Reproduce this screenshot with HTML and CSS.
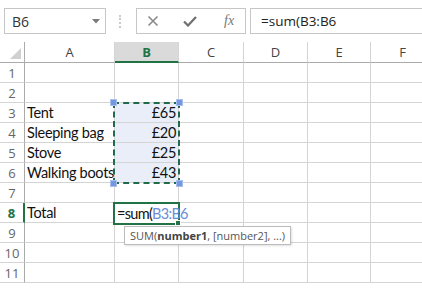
FILE: index.html
```html
<!DOCTYPE html>
<html lang="en">
<head>
    <meta charset="UTF-8">
    <title>Book1 - Excel</title>
    <link rel="stylesheet" href="styles.css">
</head>
<body>

    <div class="toolbar">
        <div class="namebox">
            <span>B6</span>
            <svg class="drop" width="8" height="5" viewBox="0 0 8 5"><path d="M0 0h8L4 4.5z" fill="#7a7a7a"/></svg>
        </div>
        <div class="grip"></div>
        <div class="fx-buttons">
            <svg class="cancel" width="12" height="12" viewBox="0 0 12 12"><path d="M1.5 1.5l9 9M10.5 1.5l-9 9" stroke="#8a8a8a" stroke-width="1.6" fill="none"/></svg>
            <svg class="enter" width="14" height="11" viewBox="0 0 14 11"><path d="M1 5.5l4 4L13 1" stroke="#6f6f6f" stroke-width="2.2" fill="none"/></svg>
            <span class="fx">fx</span>
        </div>
        <div class="formula">=sum(B3:B6</div>
    </div>

    <div class="sheet">
        <div class="grid">
            <div class="corner"><span class="tri"></span></div>
            <div class="col">A</div>
            <div class="col on">B</div>
            <div class="col">C</div>
            <div class="col">D</div>
            <div class="col">E</div>
            <div class="col">F</div>

            <div class="row">1</div><div class="cell a"></div><div class="cell"></div><div class="cell"></div><div class="cell"></div><div class="cell"></div><div class="cell"></div>
            <div class="row">2</div><div class="cell a"></div><div class="cell"></div><div class="cell"></div><div class="cell"></div><div class="cell"></div><div class="cell"></div>
            <div class="row">3</div><div class="cell a">Tent</div><div class="cell num sel">£65</div><div class="cell"></div><div class="cell"></div><div class="cell"></div><div class="cell"></div>
            <div class="row">4</div><div class="cell a">Sleeping bag</div><div class="cell num sel">£20</div><div class="cell"></div><div class="cell"></div><div class="cell"></div><div class="cell"></div>
            <div class="row">5</div><div class="cell a">Stove</div><div class="cell num sel">£25</div><div class="cell"></div><div class="cell"></div><div class="cell"></div><div class="cell"></div>
            <div class="row">6</div><div class="cell a">Walking boots</div><div class="cell num sel">£43</div><div class="cell"></div><div class="cell"></div><div class="cell"></div><div class="cell"></div>
            <div class="row">7</div><div class="cell a"></div><div class="cell"></div><div class="cell"></div><div class="cell"></div><div class="cell"></div><div class="cell"></div>
            <div class="row on">8</div><div class="cell a">Total</div><div class="cell"></div><div class="cell"></div><div class="cell"></div><div class="cell"></div><div class="cell"></div>
            <div class="row">9</div><div class="cell a"></div><div class="cell"></div><div class="cell"></div><div class="cell"></div><div class="cell"></div><div class="cell"></div>
            <div class="row">10</div><div class="cell a"></div><div class="cell"></div><div class="cell"></div><div class="cell"></div><div class="cell"></div><div class="cell"></div>
            <div class="row">11</div><div class="cell a"></div><div class="cell"></div><div class="cell"></div><div class="cell"></div><div class="cell"></div><div class="cell"></div>
        </div>

        <!-- range being referenced by the formula -->
        <div class="marquee">
            <span class="knob tl"></span><span class="knob tr"></span>
            <span class="knob bl"></span><span class="knob br"></span>
        </div>

        <div class="active">
            <span class="fill"></span>
            <span class="edit">=sum(<span class="ref">B3:B6</span><span class="caret"></span></span>
        </div>

        <div class="tip">SUM(<b>number1</b>, [number2], ...)</div>
    </div>

</body>
</html>
```

FILE: styles.css
```css
body {
    margin: 0;
    background: white;
    font-family: Lato, "Liberation Sans", sans-serif;
    overflow: hidden;
}
.toolbar {
    display: flex;
    align-items: center;
    height: 42px;
    padding: 0 0 0 4px;
    box-sizing: border-box;
    font-family: "Open Sans", "Noto Sans", sans-serif;
}
.namebox {
    display: flex;
    align-items: center;
    justify-content: space-between;
    width: 102px;
    height: 26px;
    border: 1px solid #c6c6c6;
    box-sizing: border-box;
    padding: 0 5px 0 7px;
    font-size: 14px;
    color: #333;
}
.grip {
    width: 0;
    height: 13px;
    margin: 0 15px 0 13px;
    border-left: 2px dotted #c8c8c8;
}
.fx-buttons {
    display: flex;
    align-items: center;
    width: 110px;
    height: 26px;
    border: 1px solid #c6c6c6;
    box-sizing: border-box;
    padding: 0 0 0 10px;
}
.enter {
    margin-left: 24px;
}
.fx {
    margin-left: 27px;
    font-family: "Liberation Serif", serif;
    font-style: italic;
    font-size: 14px;
    color: #777;
}
.formula {
    flex: 1;
    height: 26px;
    margin-left: 4px;
    border: 1px solid #c6c6c6;
    border-right: none;
    box-sizing: border-box;
    padding-left: 10px;
    font-size: 13.5px;
    line-height: 24px;
    color: #222;
}
.sheet {
    position: relative;
}
.grid {
    display: grid;
    grid-template-columns: 25px 90px 64px 65px 64px 63px 64px;
    grid-auto-rows: 20px;
    grid-template-rows: 21px;
}
.grid > div {
    box-sizing: border-box;
    border-right: 1px solid #d4d4d4;
    border-bottom: 1px solid #d4d4d4;
    white-space: nowrap;
}
.corner {
    position: relative;
    border-bottom-color: #ababab !important;
    border-right-color: #ababab !important;
}
.tri {
    position: absolute;
    right: 3px;
    bottom: 3px;
    border-left: 11px solid transparent;
    border-bottom: 11px solid #d0d0d0;
}
.col {
    border-bottom-color: #ababab !important;
    text-align: center;
    font-family: "Open Sans", "Noto Sans", sans-serif;
    font-size: 13px;
    line-height: 20px;
    color: #444;
}
.col.on {
    background: #dadada;
    color: #217346;
    font-weight: bold;
    border-bottom: 2px solid #217346 !important;
}
.row {
    border-right-color: #ababab !important;
    text-align: center;
    font-family: "Open Sans", "Noto Sans", sans-serif;
    font-size: 13px;
    line-height: 20px;
    color: #666;
}
.row.on {
    color: #217346;
    font-weight: bold;
    border-right: 2px solid #217346 !important;
}
.cell {
    font-size: 14.5px;
    letter-spacing: -0.3px;
    line-height: 20px;
    color: #111;
    padding: 0 2px;
    overflow: hidden;
}
.num {
    text-align: right;
}
.sel {
    background: #e9eef9;
}
.marquee {
    position: absolute;
    left: 113px;
    top: 60px;
    width: 67px;
    height: 82px;
    box-sizing: border-box;
    border: 2px dashed #1f6b4a;
}
.knob {
    position: absolute;
    width: 5px;
    height: 5px;
    background: #7397e0;
    border: 1px solid #a9c0ee;
}
.tl { left: -5px; top: -5px; }
.tr { right: -5px; top: -5px; }
.bl { left: -5px; bottom: -5px; }
.br { right: -5px; bottom: -5px; }
.active {
    position: absolute;
    left: 113px;
    top: 160px;
    width: 67px;
    height: 23px;
    box-sizing: border-box;
    border: 2px solid #217346;
    background: white;
}
.edit {
    position: relative;
    display: flex;
    align-items: center;
    height: 19px;
    padding-left: 2px;
    font-size: 14.5px;
    letter-spacing: -0.7px;
    color: #111;
    white-space: nowrap;
}
.ref {
    color: #6d8dd6;
}
.caret {
    display: inline-block;
    width: 1px;
    height: 17px;
    margin-left: 2px;
    background: #111;
}
.fill {
    position: absolute;
    right: -3px;
    bottom: -3px;
    width: 4px;
    height: 4px;
    background: #217346;
    border: 1px solid white;
}
.tip {
    position: absolute;
    left: 124px;
    top: 184px;
    height: 19px;
    padding: 0 5px;
    box-sizing: border-box;
    border: 1px solid #bcbcbc;
    background: white;
    box-shadow: 1px 1px 2px rgba(0, 0, 0, 0.12);
    font-family: "Open Sans", "Noto Sans", sans-serif;
    font-size: 11px;
    line-height: 17px;
    color: #555;
    white-space: nowrap;
}
.tip b {
    color: #444;
}
```
